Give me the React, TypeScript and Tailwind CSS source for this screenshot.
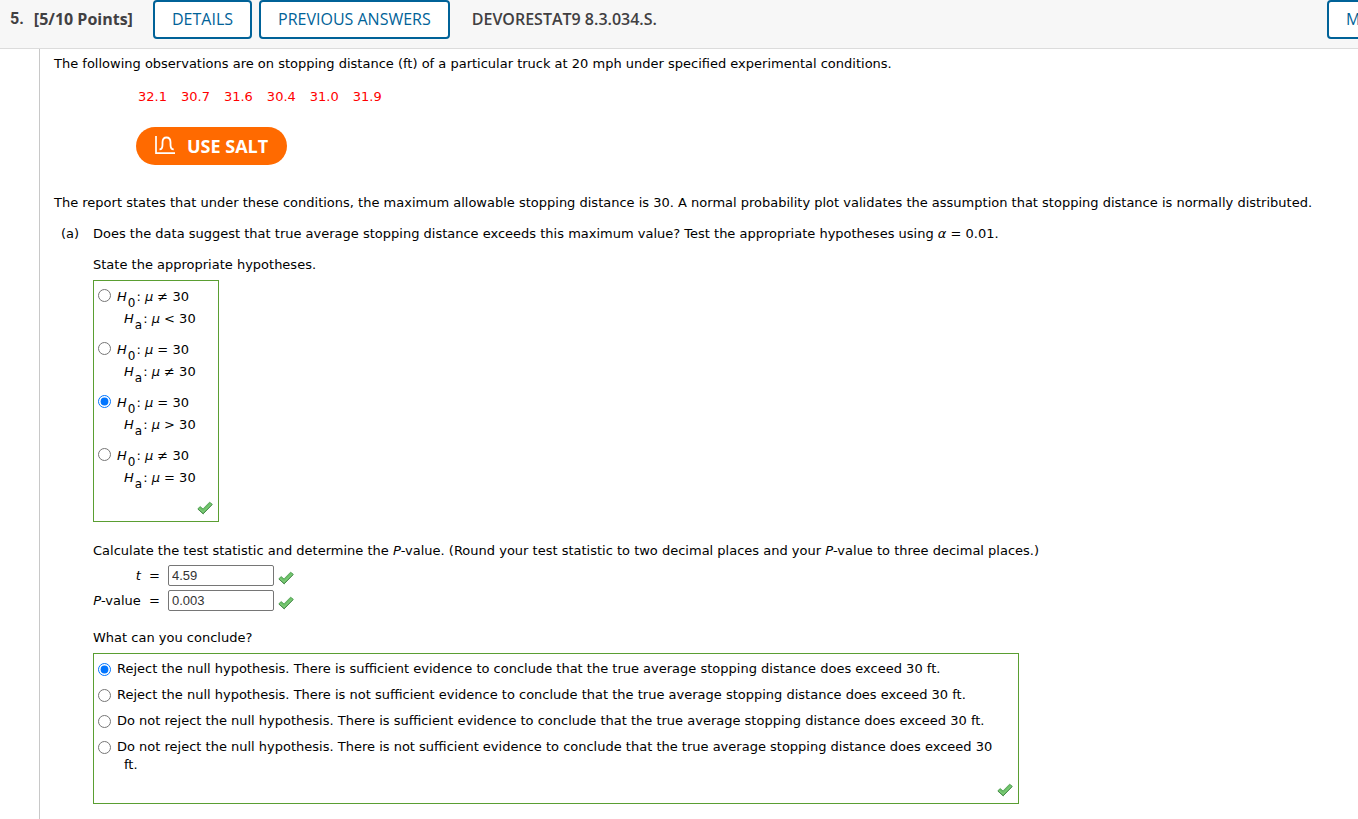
import { useState } from "react";
import type { ReactNode } from "react";

function Check() {
  return (
    <svg className="block h-4 w-4 shrink-0" viewBox="0 0 16 16" role="img" aria-label="Correct">
      <path d="M.8 8.8 3.2 6.6 6 8.9 12.6 2.2 15.3 4.2 6.2 13.8Z" fill="#6abf66" stroke="#4a9a4c" strokeWidth="0.8" strokeLinejoin="round" />
      <path d="M2.2 8.7 6.1 12 14 4.3" fill="none" stroke="#7dcb78" strokeWidth="1.2" />
      <path d="M1 9.2 6.2 13.8 15 4.8" fill="none" stroke="#3d7f40" strokeWidth="0.8" />
    </svg>
  );
}

function SaltIcon() {
  return (
    <svg className="h-5 w-5 shrink-0" viewBox="0 0 20 20" fill="none" stroke="white" aria-hidden="true">
      <path d="M1 0V17.2H20" strokeWidth="1.7" />
      <path d="M4.5 13.4C6.8 13.4 7.5 11.8 7.5 8.8V6.2C7.5 3 9 1.5 11.5 1.5S15.5 3 15.5 6.2V8.8C15.5 11.8 16.3 13.4 18.7 13.4" strokeWidth="1.8" />
    </svg>
  );
}

function HeaderButton({ children }: { children: ReactNode }) {
  return (
    <button
      type="button"
      className="h-[39px] shrink-0 whitespace-nowrap rounded border-2 border-[#006298] bg-white px-[17px] pb-0.5 text-base font-medium text-[#006298]"
    >
      {children}
    </button>
  );
}

function Hypothesis({ sub, rel }: { sub: string; rel: string }) {
  return (
    <span className="block h-[22px] whitespace-nowrap leading-[22px]">
      <i>H</i>
      <sub className="-bottom-1.5 mx-px text-xs leading-none">{sub}</sub>: <i>μ</i> {rel} 30
    </span>
  );
}

type ChoiceProps = {
  name: string;
  id: string;
  checked: boolean;
  onSelect: () => void;
  children: ReactNode;
};

function Choice({ name, id, checked, onSelect, children }: ChoiceProps) {
  return (
    <div className="flex items-start gap-1.5">
      <input
        type="radio"
        id={id}
        name={name}
        checked={checked}
        onChange={onSelect}
        className="mt-[3px] h-[13px] w-[13px] shrink-0"
      />
      <label htmlFor={id}>{children}</label>
    </div>
  );
}

const observations = ["32.1", "30.7", "31.6", "30.4", "31.0", "31.9"];

const hypotheses = [
  ["≠", "<"],
  ["=", "≠"],
  ["=", ">"],
  ["≠", "="],
];

const conclusions = [
  "Reject the null hypothesis. There is sufficient evidence to conclude that the true average stopping distance does exceed 30 ft.",
  "Reject the null hypothesis. There is not sufficient evidence to conclude that the true average stopping distance does exceed 30 ft.",
  "Do not reject the null hypothesis. There is sufficient evidence to conclude that the true average stopping distance does exceed 30 ft.",
  "Do not reject the null hypothesis. There is not sufficient evidence to conclude that the true average stopping distance does exceed 30 ft.",
];

const fieldClass =
  "h-[21px] w-[106px] rounded-[2px] border border-[#767676] bg-white px-[3px] font-['Liberation_Sans',sans-serif] text-[13px] text-[#333]";

export default function App() {
  const [hypothesis, setHypothesis] = useState(2);
  const [conclusion, setConclusion] = useState(0);

  return (
    <div className="flex h-screen flex-col overflow-hidden bg-white font-['DejaVu_Sans',sans-serif] text-[13px] leading-5 text-black">
      <header className="flex h-[49px] shrink-0 items-start border-b border-[#dcdcdc] bg-[#f7f7f7] font-['Open_Sans',sans-serif] text-base text-[#414042]">
        <h1 className="flex h-[38px] w-[153px] shrink-0 items-center gap-2.5 pl-2.5 font-bold">
          <span className="font-['Roboto',sans-serif]">5.</span>
          <span>[5/10 Points]</span>
        </h1>
        <div className="flex gap-[7px]">
          <HeaderButton>DETAILS</HeaderButton>
          <HeaderButton>PREVIOUS ANSWERS</HeaderButton>
        </div>
        <span className="flex h-[38px] items-center pl-[22px] font-semibold">DEVORESTAT9 8.3.034.S.</span>
        <div className="ml-auto w-[31px] overflow-hidden">
          <HeaderButton>MY NOTES</HeaderButton>
        </div>
      </header>

      <main className="ml-[39px] grow border-l border-[#c8c8c8] pl-3.5 pt-[5px]">
        <p>
          The following observations are on stopping distance (ft) of a particular truck at 20 mph under specified
          experimental conditions.
        </p>
        <div className="mt-[13px] flex gap-3.5 pl-[84px] text-[#ff0000]">
          {observations.map((value) => (
            <span key={value}>{value}</span>
          ))}
        </div>
        <button
          type="button"
          className="ml-[82px] mt-5 flex h-[38px] items-center gap-3 rounded-full bg-[#ff6a00] px-[19px] font-['Open_Sans',sans-serif] text-lg font-bold text-white"
        >
          <SaltIcon />
          USE SALT
        </button>
        <p className="mt-7 whitespace-nowrap">
          The report states that under these conditions, the maximum allowable stopping distance is 30. A normal
          probability plot validates the assumption that stopping distance is normally distributed.
        </p>

        <section className="mt-[11px] flex">
          <span className="w-[39px] shrink-0 pl-[7px]">(a)</span>
          <div className="min-w-0">
            <p>
              Does the data suggest that true average stopping distance exceeds this maximum value? Test the
              appropriate hypotheses using <i>α</i> = 0.01.
            </p>
            <p className="mt-[11px]">State the appropriate hypotheses.</p>

            <div className="mt-[5px] flex w-[126px] flex-col gap-[9px] border border-[#5a9e32] pb-[5px] pl-1 pr-[5px] pt-[5px]">
              {hypotheses.map(([h0, ha], i) => (
                <Choice
                  key={i}
                  name="hypothesis"
                  id={`hypothesis-${i}`}
                  checked={hypothesis === i}
                  onSelect={() => setHypothesis(i)}
                >
                  <Hypothesis sub="0" rel={h0} />
                  <span className="block pl-[7px]">
                    <Hypothesis sub="a" rel={ha} />
                  </span>
                </Choice>
              ))}
              <div className="mt-0.5 flex justify-end">
                <Check />
              </div>
            </div>

            <p className="mt-[19px]">
              Calculate the test statistic and determine the <i>P</i>-value. (Round your test statistic to two decimal
              places and your <i>P</i>-value to three decimal places.)
            </p>
            <div className="mt-1 grid grid-cols-[67px_auto_auto] items-center justify-start gap-x-2 gap-y-1">
              <label htmlFor="t-stat" className="whitespace-nowrap text-right">
                <i>t</i>&nbsp; =
              </label>
              <input id="t-stat" type="text" defaultValue="4.59" className={fieldClass} />
              <div className="-ml-1 pt-1">
                <Check />
              </div>
              <label htmlFor="p-value" className="whitespace-nowrap text-right">
                <i>P</i>-value&nbsp; =
              </label>
              <input id="p-value" type="text" defaultValue="0.003" className={fieldClass} />
              <div className="-ml-1 pt-1">
                <Check />
              </div>
            </div>

            <p className="mt-[17px]">What can you conclude?</p>
            <div className="mt-[5px] flex max-w-[926px] flex-col gap-2 border border-[#5a9e32] pb-[5px] pl-1 pr-[5px] pt-1.5 leading-[18px]">
              {conclusions.map((text, i) => (
                <Choice
                  key={i}
                  name="conclusion"
                  id={`conclusion-${i}`}
                  checked={conclusion === i}
                  onSelect={() => setConclusion(i)}
                >
                  <span className="block pl-[7px] pr-4 -indent-[7px]">{text}</span>
                </Choice>
              ))}
              <div className="flex justify-end">
                <Check />
              </div>
            </div>
          </div>
        </section>
      </main>
    </div>
  );
}
